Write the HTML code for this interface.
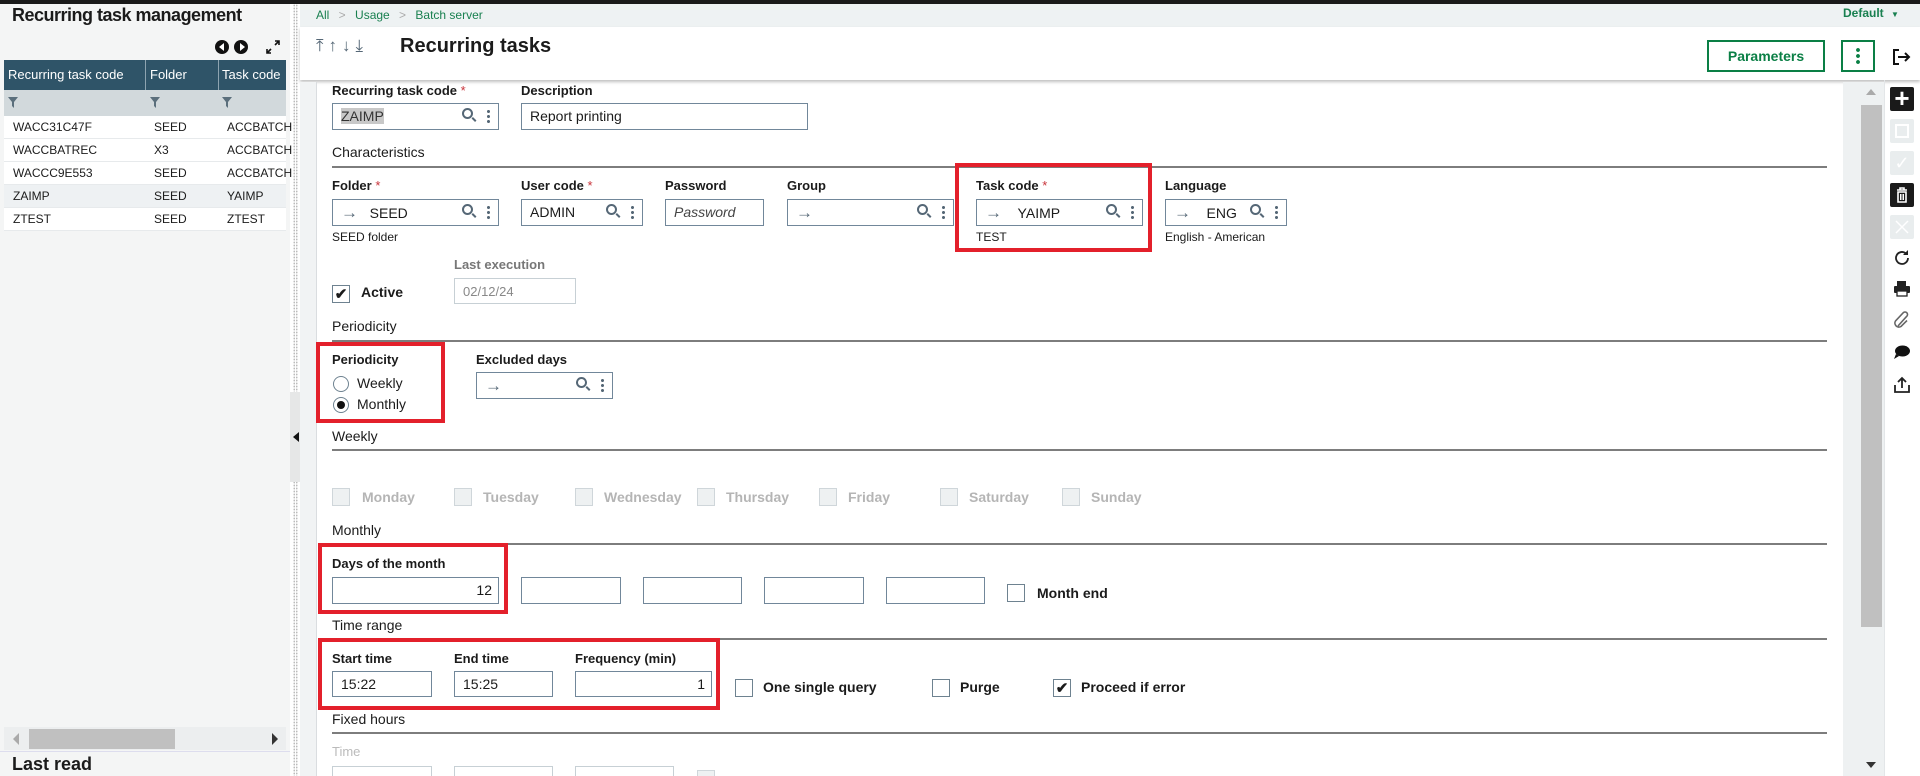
<!DOCTYPE html>
<html style="overflow:hidden;width:1920px;height:776px"><head><meta charset="utf-8"><style>
*{box-sizing:border-box;margin:0;padding:0}
body{width:1920px;height:776px;overflow:hidden;background:#fff;font-family:"Liberation Sans",sans-serif;color:#1b1b1b;position:relative}
#wrap{position:absolute;left:0;top:0;width:1920px;height:776px;overflow:hidden}
.a{position:absolute}
.lbl{position:absolute;font-size:13px;font-weight:bold;line-height:14px;white-space:nowrap}
.star{color:#c8333a;font-weight:normal}
.inp{position:absolute;border:1px solid #71879a;background:#fff;font-size:14px;line-height:25px;padding-left:8px;white-space:nowrap}
.sec{position:absolute;left:332px;font-size:14px;line-height:16px}
.line{position:absolute;left:332px;width:1495px;height:2px;background:#7d7d7d}
.red{position:absolute;border:4px solid #e3202b}
.q{position:absolute;top:4px;width:11px;height:11px;border:2px solid #556776;border-radius:50%}
.q:after{content:"";position:absolute;width:2px;height:5px;background:#556776;right:-4px;bottom:-5px;transform:rotate(-45deg)}
.k{position:absolute;top:5px;width:3px;height:14px;background:radial-gradient(circle,#556776 1.4px,transparent 1.6px) 0 0/3px 5px repeat-y}
.arr{color:#556776;font-size:17px}
.cb{position:absolute;width:18px;height:18px;border:1px solid #6e8290;background:#fff}
.cbd{position:absolute;width:18px;height:18px;border:1px solid #cfd6da;background:#eef1f2}
.dl{position:absolute;font-size:14px;font-weight:bold;color:#b5b5b5}
.tb{position:absolute;left:1890px;width:24px;height:24px;border-radius:2px}
.row{position:absolute;left:4px;width:282px;height:23px;border-bottom:1px solid #e7eaec;font-size:12px;line-height:22px;background:#fff}
.row span{position:absolute}
</style></head><body><div id="wrap">
<div class="a" style="left:0;top:0;width:1920px;height:4px;background:#1a1a1a"></div>
<div class="a" style="left:0;top:4px;width:290px;height:772px;background:#f4f5f5"></div>
<div class="a" style="left:12px;top:4px;font-size:18px;font-weight:bold;line-height:22px;letter-spacing:-0.5px">Recurring task management</div>
<div class="a" style="left:215px;top:40px;width:14px;height:14px;border-radius:50%;background:#111"></div>
<div class="a" style="left:219px;top:43px;width:0;height:0;border-top:4px solid transparent;border-bottom:4px solid transparent;border-right:5px solid #fff"></div>
<div class="a" style="left:234px;top:40px;width:14px;height:14px;border-radius:50%;background:#111"></div>
<div class="a" style="left:240px;top:43px;width:0;height:0;border-top:4px solid transparent;border-bottom:4px solid transparent;border-left:5px solid #fff"></div>
<svg class="a" style="left:266px;top:40px" width="14" height="14"><path d="M9 1h4v4M13 1l-4 4M5 13H1V9M1 13l4-4" stroke="#111" stroke-width="1.6" fill="none"/></svg>
<div class="a" style="left:4px;top:60px;width:282px;height:30px;background:#2f5468"></div>
<div class="a" style="left:145px;top:60px;width:1px;height:56px;background:#8ea4b0"></div>
<div class="a" style="left:218px;top:60px;width:1px;height:56px;background:#8ea4b0"></div>
<div class="a" style="left:8px;top:67px;color:#fff;font-size:13px">Recurring task code</div>
<div class="a" style="left:150px;top:67px;color:#fff;font-size:13px">Folder</div>
<div class="a" style="left:222px;top:67px;color:#fff;font-size:13px;white-space:nowrap;width:64px;overflow:hidden">Task code</div>
<div class="a" style="left:4px;top:90px;width:282px;height:26px;background:#d2d9dc"></div>
<svg class="a" style="left:8px;top:97px" width="10" height="11"><path d="M0 0h10L6 5v6L4 9V5z" fill="#5b6f7c"/></svg>
<svg class="a" style="left:150px;top:97px" width="10" height="11"><path d="M0 0h10L6 5v6L4 9V5z" fill="#5b6f7c"/></svg>
<svg class="a" style="left:222px;top:97px" width="10" height="11"><path d="M0 0h10L6 5v6L4 9V5z" fill="#5b6f7c"/></svg>
<div class="row" style="top:116px"><span style="left:9px">WACC31C47F</span><span style="left:150px">SEED</span><span style="left:223px">ACCBATCH</span></div>
<div class="row" style="top:139px"><span style="left:9px">WACCBATREC</span><span style="left:150px">X3</span><span style="left:223px">ACCBATCH</span></div>
<div class="row" style="top:162px"><span style="left:9px">WACCC9E553</span><span style="left:150px">SEED</span><span style="left:223px">ACCBATCH</span></div>
<div class="row" style="top:185px;background:#eef1f3"><span style="left:9px">ZAIMP</span><span style="left:150px">SEED</span><span style="left:223px">YAIMP</span></div>
<div class="row" style="top:208px"><span style="left:9px">ZTEST</span><span style="left:150px">SEED</span><span style="left:223px">ZTEST</span></div>
<div class="a" style="left:4px;top:727px;width:282px;height:23px;background:#eceeef"></div>
<div class="a" style="left:29px;top:729px;width:146px;height:20px;background:#c0c0c0"></div>
<div class="a" style="left:13px;top:733px;border-top:6px solid transparent;border-bottom:6px solid transparent;border-right:6px solid #aaa"></div>
<div class="a" style="left:272px;top:733px;border-top:6px solid transparent;border-bottom:6px solid transparent;border-left:6px solid #333"></div>
<div class="a" style="left:0;top:751px;width:290px;height:1px;background:#dde"></div>
<div class="a" style="left:12px;top:753px;font-size:18px;font-weight:bold;line-height:22px">Last read</div>
<div class="a" style="left:293px;top:4px;width:5px;height:772px;background:radial-gradient(circle,#bbb 0.8px,transparent 1px) 0 0/2.5px 3px"></div>
<div class="a" style="left:290px;top:392px;width:10px;height:90px;background:#e6e7e7"></div>
<div class="a" style="left:293px;top:432px;border-top:5px solid transparent;border-bottom:5px solid transparent;border-right:6px solid #111"></div>
<div class="a" style="left:300px;top:4px;width:1620px;height:23px;background:#eef2f3"></div>
<div class="a" style="left:316px;top:7px;font-size:12px;color:#198050;line-height:16px">All <span style="color:#aaa;margin:0 6px">&gt;</span> Usage <span style="color:#aaa;margin:0 6px">&gt;</span> Batch server</div>
<div class="a" style="left:1843px;top:6px;font-size:12px;font-weight:bold;color:#198050">Default <span style="font-size:8px;margin-left:4px">▼</span></div>
<div class="a" style="left:300px;top:27px;width:1620px;height:53px;background:#fff;box-shadow:0 2px 3px rgba(0,0,0,.25)"></div>
<div class="a" style="left:316px;top:36px;font-size:17px;color:#556776;letter-spacing:5px">⤒↑↓⤓</div>
<div class="a" style="left:400px;top:34px;font-size:20px;font-weight:bold;line-height:24px">Recurring tasks</div>
<div class="a" style="left:1707px;top:40px;width:118px;height:32px;border:2px solid #0a7f45;color:#0a7f45;font-size:14px;font-weight:bold;text-align:center;line-height:28px">Parameters</div>
<div class="a" style="left:1841px;top:40px;width:34px;height:32px;border:2px solid #0a7f45"></div>
<div class="a" style="left:1856px;top:47px;width:4px;height:18px;background:radial-gradient(circle,#0a7f45 1.8px,transparent 2px) 0 0/4px 6px repeat-y"></div>
<svg class="a" style="left:1893px;top:49px" width="18" height="16"><path d="M6 1H1v14h5M5 8h11M12 4l4 4-4 4" stroke="#111" stroke-width="2" fill="none"/></svg>
<div class="a" style="left:300px;top:82px;width:16px;height:694px;background:#f1f3f4"></div>
<div class="a" style="left:316px;top:82px;width:1px;height:694px;background:#dadde0"></div>
<div class="a" style="left:1843px;top:82px;width:41px;height:694px;background:#eef1f2"></div>
<div class="a" style="left:1861px;top:105px;width:21px;height:522px;background:#c0c0c0"></div>
<div class="a" style="left:1866px;top:89px;border-left:5px solid transparent;border-right:5px solid transparent;border-bottom:6px solid #aaa"></div>
<div class="a" style="left:1866px;top:762px;border-left:5px solid transparent;border-right:5px solid transparent;border-top:6px solid #333"></div>
<div class="a" style="left:1884px;top:80px;width:1px;height:696px;background:#e3e6e8"></div>
<div class="tb" style="top:87px;background:#1a1a1a;color:#fff;font-size:26px;line-height:23px;text-align:center;font-weight:bold">+</div>
<div class="tb" style="top:119px;background:#e9edee"><div class="a" style="left:5px;top:5px;width:14px;height:14px;border:2px solid #fff"></div></div>
<div class="tb" style="top:151px;background:#e9edee;color:#fff;font-size:18px;text-align:center;line-height:24px">✓</div>
<div class="tb" style="top:183px;background:#1a1a1a"><svg width="24" height="24"><path d="M7 7h10M10 7V5h4v2M8 9h8v10H8z" stroke="#fff" stroke-width="1.6" fill="none"/><path d="M10.5 11v6M12 11v6M13.5 11v6" stroke="#fff" stroke-width="1"/></svg></div>
<div class="tb" style="top:215px;background:#e9edee"><svg width="24" height="24"><path d="M6 6l12 12M18 6L6 18" stroke="#fff" stroke-width="1.5"/></svg></div>
<svg class="a" style="left:1893px;top:249px" width="18" height="18"><path d="M15 9a6 6 0 1 1-2-4.5" stroke="#222" stroke-width="1.8" fill="none"/><path d="M15 1v5h-5z" fill="#222"/></svg>
<svg class="a" style="left:1893px;top:280px" width="18" height="17"><rect x="4" y="1" width="9" height="5" fill="#222"/><rect x="1" y="6" width="16" height="7" rx="1" fill="#222"/><rect x="4" y="11" width="10" height="5" fill="#fff" stroke="#222" stroke-width="1.3"/></svg>
<svg class="a" style="left:1893px;top:311px" width="18" height="18"><path d="M5 15L14 5a2.5 2.5 0 0 0-3.5-3.5L2.5 10a4 4 0 0 0 5.5 5.5l6-6" stroke="#666" stroke-width="1.6" fill="none"/></svg>
<svg class="a" style="left:1893px;top:344px" width="18" height="16"><ellipse cx="9.5" cy="7" rx="7.5" ry="5.5" fill="#111"/><path d="M3 10l-2 5 5-3z" fill="#111"/></svg>
<svg class="a" style="left:1893px;top:376px" width="18" height="18"><path d="M2 9v7h14V9M9 12V2M5 6l4-4 4 4" stroke="#222" stroke-width="1.8" fill="none"/></svg>

<div class="lbl" style="left:332px;top:84px">Recurring task code <span class="star">*</span></div>
<div class="lbl" style="left:521px;top:84px">Description</div>
<div class="inp" style="left:332px;top:103px;width:167px;height:27px"><span style="background:#c8c8c8;color:#333">ZAIMP</span><div class="q" style="left:129px"></div><div class="k" style="left:154px"></div></div>
<div class="inp" style="left:521px;top:103px;width:287px;height:27px">Report printing</div>
<div class="sec" style="top:144px">Characteristics</div>
<div class="line" style="top:166px"></div>
<div class="lbl" style="left:332px;top:179px">Folder <span class="star">*</span></div>
<div class="lbl" style="left:521px;top:179px">User code <span class="star">*</span></div>
<div class="lbl" style="left:665px;top:179px">Password</div>
<div class="lbl" style="left:787px;top:179px">Group</div>
<div class="lbl" style="left:976px;top:179px">Task code <span class="star">*</span></div>
<div class="lbl" style="left:1165px;top:179px">Language</div>
<div class="inp" style="left:332px;top:199px;width:167px;height:27px"><span class="arr">→</span>&nbsp;&nbsp;&nbsp;SEED<div class="q" style="left:129px"></div><div class="k" style="left:154px"></div></div>
<div class="inp" style="left:521px;top:199px;width:122px;height:27px">ADMIN<div class="q" style="left:84px"></div><div class="k" style="left:109px"></div></div>
<div class="inp" style="left:665px;top:199px;width:99px;height:27px;font-style:italic;color:#444">Password</div>
<div class="inp" style="left:787px;top:199px;width:167px;height:27px"><span class="arr">→</span><div class="q" style="left:129px"></div><div class="k" style="left:154px"></div></div>
<div class="inp" style="left:976px;top:199px;width:167px;height:27px"><span class="arr">→</span>&nbsp;&nbsp;&nbsp;&nbsp;YAIMP<div class="q" style="left:129px"></div><div class="k" style="left:154px"></div></div>
<div class="inp" style="left:1165px;top:199px;width:122px;height:27px"><span class="arr">→</span>&nbsp;&nbsp;&nbsp;&nbsp;ENG<div class="q" style="left:84px"></div><div class="k" style="left:109px"></div></div>
<div class="a" style="left:332px;top:230px;font-size:12px">SEED folder</div>
<div class="a" style="left:976px;top:230px;font-size:12px">TEST</div>
<div class="a" style="left:1165px;top:230px;font-size:12px">English - American</div>
<div class="red" style="left:955px;top:163px;width:197px;height:89px"></div>
<div class="lbl" style="left:454px;top:258px;color:#777">Last execution</div>
<div class="inp" style="left:454px;top:278px;width:122px;height:26px;border-color:#c7d0d5;color:#888;font-size:13px">02/12/24</div>
<div class="cb" style="left:332px;top:285px;font-size:15px;line-height:17px;text-align:center;font-weight:bold">✔</div>
<div class="a" style="left:361px;top:284px;font-size:14px;font-weight:bold">Active</div>

<div class="sec" style="top:318px">Periodicity</div>
<div class="line" style="top:340px"></div>
<div class="lbl" style="left:332px;top:353px">Periodicity</div>
<div class="a" style="left:333px;top:376px;width:16px;height:16px;border:1px solid #6e8290;border-radius:50%"></div>
<div class="a" style="left:357px;top:375px;font-size:14px">Weekly</div>
<div class="a" style="left:333px;top:397px;width:16px;height:16px;border:1px solid #6e8290;border-radius:50%"></div>
<div class="a" style="left:337px;top:401px;width:8px;height:8px;background:#111;border-radius:50%"></div>
<div class="a" style="left:357px;top:396px;font-size:14px">Monthly</div>
<div class="red" style="left:316px;top:342px;width:129px;height:81px"></div>
<div class="lbl" style="left:476px;top:353px">Excluded days</div>
<div class="inp" style="left:476px;top:372px;width:137px;height:27px"><span class="arr">→</span><div class="q" style="left:99px"></div><div class="k" style="left:124px"></div></div>

<div class="sec" style="top:428px">Weekly</div>
<div class="line" style="top:449px"></div>
<div class="cbd" style="left:332px;top:488px"></div><div class="dl" style="left:362px;top:489px">Monday</div>
<div class="cbd" style="left:454px;top:488px"></div><div class="dl" style="left:483px;top:489px">Tuesday</div>
<div class="cbd" style="left:575px;top:488px"></div><div class="dl" style="left:604px;top:489px">Wednesday</div>
<div class="cbd" style="left:697px;top:488px"></div><div class="dl" style="left:726px;top:489px">Thursday</div>
<div class="cbd" style="left:819px;top:488px"></div><div class="dl" style="left:848px;top:489px">Friday</div>
<div class="cbd" style="left:940px;top:488px"></div><div class="dl" style="left:969px;top:489px">Saturday</div>
<div class="cbd" style="left:1062px;top:488px"></div><div class="dl" style="left:1091px;top:489px">Sunday</div>

<div class="sec" style="top:522px">Monthly</div>
<div class="line" style="top:543px"></div>
<div class="lbl" style="left:332px;top:557px">Days of the month</div>
<div class="inp" style="left:332px;top:577px;width:167px;height:27px;text-align:right;padding-right:6px">12</div>
<div class="inp" style="left:521px;top:577px;width:100px;height:27px"></div>
<div class="inp" style="left:643px;top:577px;width:99px;height:27px"></div>
<div class="inp" style="left:764px;top:577px;width:100px;height:27px"></div>
<div class="inp" style="left:886px;top:577px;width:99px;height:27px"></div>
<div class="cb" style="left:1007px;top:584px"></div>
<div class="a" style="left:1037px;top:585px;font-size:14px;font-weight:bold">Month end</div>
<div class="red" style="left:318px;top:543px;width:190px;height:71px"></div>

<div class="sec" style="top:617px">Time range</div>
<div class="line" style="top:638px"></div>
<div class="lbl" style="left:332px;top:652px">Start time</div>
<div class="lbl" style="left:454px;top:652px">End time</div>
<div class="lbl" style="left:575px;top:652px">Frequency (min)</div>
<div class="inp" style="left:332px;top:671px;width:100px;height:26px">15:22</div>
<div class="inp" style="left:454px;top:671px;width:99px;height:26px">15:25</div>
<div class="inp" style="left:575px;top:671px;width:137px;height:26px;text-align:right;padding-right:6px">1</div>
<div class="red" style="left:318px;top:638px;width:402px;height:72px"></div>
<div class="cb" style="left:735px;top:679px"></div>
<div class="a" style="left:763px;top:679px;font-size:14px;font-weight:bold">One single query</div>
<div class="cb" style="left:932px;top:679px"></div>
<div class="a" style="left:960px;top:679px;font-size:14px;font-weight:bold">Purge</div>
<div class="cb" style="left:1053px;top:679px;font-size:15px;line-height:17px;text-align:center;font-weight:bold">✔</div>
<div class="a" style="left:1081px;top:679px;font-size:14px;font-weight:bold">Proceed if error</div>

<div class="sec" style="top:711px">Fixed hours</div>
<div class="line" style="top:732px"></div>
<div class="lbl" style="left:332px;top:745px;color:#bbb;font-weight:normal">Time</div>
<div class="inp" style="left:332px;top:766px;width:100px;height:10px;border-color:#c7d0d5;border-bottom:0"></div>
<div class="inp" style="left:454px;top:766px;width:99px;height:10px;border-color:#c7d0d5;border-bottom:0"></div>
<div class="inp" style="left:575px;top:766px;width:99px;height:10px;border-color:#c7d0d5;border-bottom:0"></div>
<div class="cbd" style="left:697px;top:770px;height:6px;border-bottom:0"></div>
</div></body></html>
